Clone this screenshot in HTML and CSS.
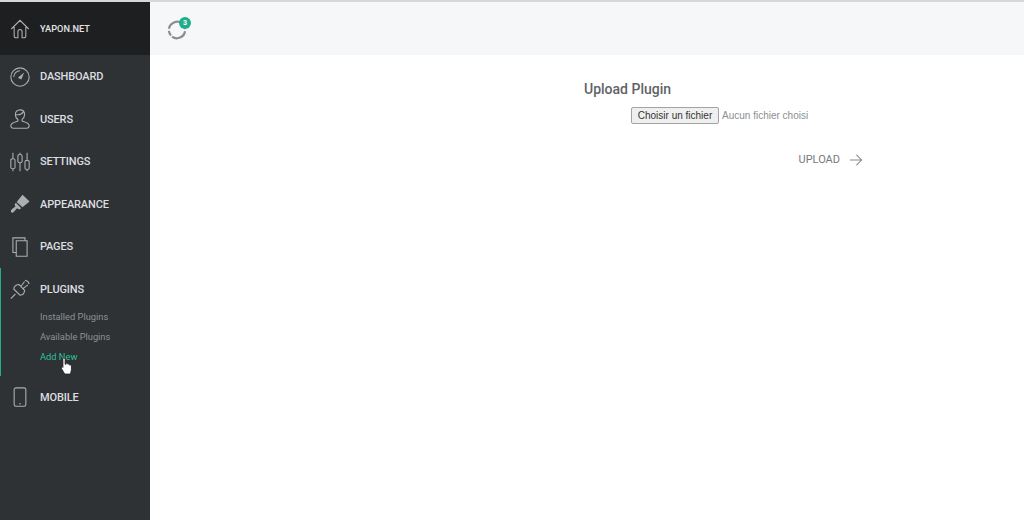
FILE: index.html
```html
<!DOCTYPE html>
<html lang="fr">
<head>
<meta charset="utf-8">
<title>Upload Plugin</title>
<link rel="stylesheet" href="styles.css">
</head>
<body>
<div class="app">
  <aside class="sidebar">
    <div class="brand">
      <svg class="icon" viewBox="0 0 24 24"><path d="M1.500 12 12 1.500 22.500 12M5 9.500V20q0 2.500 2.500 2.500h2V15q0-2.500 2.500-2.500t2.500 2.500v7.500h2q2.500 0 2.500-2.500V9.500"/></svg>
      <span class="brand-name">YAPON.NET</span>
    </div>
    <nav class="menu">
      <a class="item"><svg class="icon" viewBox="0 0 24 24"><circle cx="12" cy="12" r="11"/><path class="tick" d="M4.500 12a7.500 7.500 0 0 1 7.500-7.500"/><path class="fillp" d="M9.500 13 17 6.500 13.500 15z"/></svg><span>DASHBOARD</span></a>
      <a class="item"><svg class="icon" viewBox="0 0 24 24"><path d="M12 1c3.500 0 5.500 2.500 5.500 5.500 0 2.500-1 4.500-3 6v2c3 1 8.500 2 8.500 5.500 0 2-1 3-3 3H4c-2 0-3-1-3-3 0-3.500 5.500-4.500 8.500-5.500v-2c-2.500-1.500-3-3.500-3-6C6.500 3.500 8.500 1 12 1zM6.500 6.500C10 7.500 14 6.500 16 3.500"/></svg><span>USERS</span></a>
      <a class="item"><svg class="icon" viewBox="0 0 24 24"><path d="M3.500 1v7M3.500 20v3M12 1v2M12 13v10M20.500 1v9M20.500 21v2M1 9.500Q1 8 3.500 8T6 9.500v9Q6 20 3.500 20T1 18.500zM9.500 4.500Q9.500 3 12 3t2.500 1.500v7Q14.500 13 12 13t-2.500-1.500zM18 11.500q0-1.500 2.500-1.500t2.500 1.500v8q0 1.500-2.500 1.500T18 19.500z"/></svg><span>SETTINGS</span></a>
      <a class="item"><svg class="icon solid" viewBox="0 0 24 24"><path d="M15 1 23.500 9 15 16 8 9.500z"/><path d="M7 10.500 13.500 17 11 18.500 8.500 17 5 21q-2 2.500-3.500 1T2.500 18L6.500 15 5.500 12.500z"/></svg><span>APPEARANCE</span></a>
      <a class="item"><svg class="icon" viewBox="0 0 24 24"><path d="M7.500 18.500H3.500V1h14.500v3.500M7.500 4.500h13V23h-13z"/></svg><span>PAGES</span></a>
      <div class="group">
        <a class="item"><svg class="icon" viewBox="0 0 24 24"><path d="M1 23.500 6.500 18M4.500 12 12 19.500Q17.500 19 17.500 13.500L10.500 6.500Q5 7 4.500 12zM13 9l4.500-6M15.500 11.500l6-4.500M18 1.500q4 .5 5 4.500"/></svg><span>PLUGINS</span></a>
        <ul class="submenu">
          <li>Installed Plugins</li>
          <li>Available Plugins</li>
          <li class="current">Add New</li>
        </ul>
      </div>
      <a class="item"><svg class="icon" viewBox="0 0 24 24"><rect x="5" y="1" width="14" height="22" rx="2"/><path d="M11 20h2"/></svg><span>MOBILE</span></a>
    </nav>
    <svg class="cursor" viewBox="0 0 14 20"><path d="M4 1c1 0 1.500.8 1.500 1.500V8h1V7c1-.5 2 0 2 1 1-.5 2 0 2 1 1-.5 2 0 2 1v4l-1 5H5L1.500 13c-.5-1 0-2 1-2l.5.5V2.500C3 1.800 3.300 1 4 1z"/></svg>
  </aside>
  <main class="main">
    <header class="topbar">
      <div class="sync">
        <svg viewBox="0 0 24 24"><path d="M2.300 10.500A10 10 0 0 1 18 4M21.700 13.500A10 10 0 0 1 6 20M2.200 13q.5 3.200 2.600 5.500M21.800 11q-.5-3.200-2.600-5.500"/></svg>
        <span class="badge">3</span>
      </div>
    </header>
    <section class="content">
      <form class="upload">
        <h1>Upload Plugin</h1>
        <div class="file-row"><span class="file-button">Choisir un fichier</span><span class="file-name">Aucun fichier choisi</span></div>
        <div class="actions"><span>UPLOAD</span><svg viewBox="0 0 16 14"><path d="M1 7h13.500M8.500 1l6 6-6 6"/></svg></div>
      </form>
    </section>
  </main>
</div>
</body>
</html>
```
FILE: styles.css
```css
* { box-sizing: border-box; }
html, body { margin: 0; height: 100%; overflow: hidden; }
body { background: #fff; font-family: Roboto, "Liberation Sans", sans-serif; }
.app { display: flex; height: 520px; border-top: 2px solid #d6d7d9; }
.sidebar { position: relative; width: 150px; flex: none; background: #2f3235; color: #dcdee0; }
.brand { display: flex; align-items: center; gap: 10px; height: 53px; padding-left: 10px; background: #1e1f21; }
.brand-name { font-size: 9.200px; font-weight: 500; color: #e2e3e5; }
.icon { width: 20px; height: 20px; flex: none; fill: none; stroke: #acaeb0; stroke-width: 1.300; }
.icon.solid { fill: #acaeb0; stroke: none; }
.icon .fillp { fill: #acaeb0; stroke: none; }
.menu { display: flex; flex-direction: column; padding-top: 0.500px; }
.item { display: flex; align-items: center; gap: 10px; height: 42.500px; padding-left: 10px; font-size: 11px; font-weight: 500; letter-spacing: -0.150px; color: #dcdee0; }
.group { border-left: 1px solid #1fae8b; height: 108px; }
.group .item { padding-left: 9px; }
.submenu { list-style: none; margin: -3.500px 0 0; padding: 0 0 0 39px; font-size: 9.300px; color: #8e9194; }
.submenu li { height: 20px; line-height: 20px; }
.submenu .current { color: #2cc09a; }
.cursor { position: absolute; left: 60px; top: 355px; width: 13px; height: 18px; fill: #fff; stroke: #222; stroke-width: 1; }
.main { flex: 1; display: flex; flex-direction: column; }
.topbar { display: flex; align-items: center; height: 53px; padding: 2px 0 0 17px; background: #f6f7f9; }
.sync { position: relative; width: 20px; height: 20px; }
.sync svg { width: 20px; height: 20px; fill: none; stroke: #8b8e91; stroke-width: 2.600; display: block; }
.badge { position: absolute; top: -3px; left: 12px; width: 12px; height: 12px; border-radius: 50%; background: #1fae8b; color: #fff; font-size: 7px; line-height: 12px; text-align: center; font-weight: 700; }
.content { flex: 1; padding: 26px 0 0 434px; }
.upload { width: 279px; }
h1 { margin: 0; font-size: 14px; line-height: 17px; font-weight: 500; color: #5f6367; }
.file-row { display: flex; align-items: center; margin: 9px 0 0 47px; }
.file-button { width: 88px; height: 17px; text-align: center; background: #efefef; border: 1px solid #a3a3a3; border-radius: 2px; font: 10px/15px "Liberation Sans", sans-serif; color: #333; }
.file-name { margin-left: 3px; font: 10px/15px "Liberation Sans", sans-serif; color: #8c8f92; }
.actions { display: flex; align-items: center; justify-content: flex-end; gap: 9px; margin-top: 29px; font-size: 11px; color: #76797c; }
.actions svg { width: 14px; height: 12px; fill: none; stroke: #85888b; stroke-width: 1.200; }
```
